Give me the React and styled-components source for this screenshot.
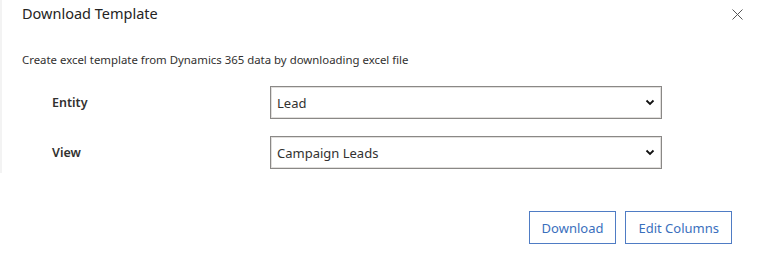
import React from "react";
import styled, { createGlobalStyle } from "styled-components";

const GlobalStyle = createGlobalStyle`
  html, body {
    margin: 0;
    padding: 0;
    background: #fff;
  }
  body {
    font-family: "Segoe UI", "Noto Sans", "Open Sans", sans-serif;
    color: #323130;
  }
`;

const Dialog = styled.div`
  width: 768px;
  height: 258px;
  position: relative;
  overflow: hidden;
`;

const Main = styled.div`
  height: 173px;
  box-sizing: border-box;
  border-left: 2px solid #f3f3f3;
`;

const Header = styled.div`
  display: flex;
  align-items: flex-start;
  justify-content: space-between;
  padding: 2px 24px 0 20px;
  height: 52px;
  box-sizing: border-box;
`;

const Title = styled.h1`
  margin: 0;
  font-size: 14.5px;
  font-weight: 400;
  color: #252423;
  line-height: 22px;
`;

const CloseButton = styled.button`
  border: none;
  background: none;
  padding: 0;
  margin-top: 5px;
  width: 14px;
  height: 14px;
  display: flex;
  align-items: center;
  justify-content: center;
  cursor: pointer;
`;

const Body = styled.div`
  padding: 0 0 0 20px;
`;

const Description = styled.p`
  margin: 0 0 18px;
  font-size: 11.4px;
  line-height: 16px;
  color: #323130;
`;

const FieldRow = styled.div`
  display: grid;
  grid-template-columns: 218px 392px;
  align-items: center;
  padding-left: 30px;
  margin-bottom: ${(p) => p.$gap}px;
`;

const Label = styled.label`
  font-size: 12.5px;
  font-weight: 600;
  color: #323130;
`;

const SelectBox = styled.div`
  height: 33px;
  box-sizing: border-box;
  border: 1px solid #8a8886;
  box-shadow: inset 0 0 0 1px #e1dfdd;
  display: flex;
  align-items: center;
  justify-content: space-between;
  padding: 0 6px 0 6px;
  font-size: 13px;
  color: #323130;
`;

const Footer = styled.div`
  display: flex;
  justify-content: flex-end;
  gap: 9px;
  padding: 38px 36px 0 0;
`;

const Button = styled.button`
  height: 33px;
  padding: 0 12px;
  border: 1px solid #4f7cc4;
  background: #fff;
  color: #3a6fbd;
  font-family: inherit;
  font-size: 13px;
  cursor: pointer;
`;

const Chevron = () => (
  <svg width="10" height="7" viewBox="0 0 10 7">
    <path d="M1.5 1.5 L5 5 L8.5 1.5" fill="none" stroke="#111" strokeWidth="1.8" />
  </svg>
);

const CloseIcon = () => (
  <svg width="11" height="11" viewBox="0 0 11 11">
    <path d="M0.5 0.5 L10.5 10.5 M10.5 0.5 L0.5 10.5" stroke="#555" strokeWidth="1" />
  </svg>
);

const App = () => {
  return (
    <Dialog>
      <GlobalStyle />
      <Main>
        <Header>
          <Title>Download Template</Title>
          <CloseButton aria-label="Close">
            <CloseIcon />
          </CloseButton>
        </Header>
        <Body>
          <Description>
            Create excel template from Dynamics 365 data by downloading excel file
          </Description>
          <FieldRow $gap={17}>
            <Label>Entity</Label>
            <SelectBox>
              <span>Lead</span>
              <Chevron />
            </SelectBox>
          </FieldRow>
          <FieldRow $gap={0}>
            <Label>View</Label>
            <SelectBox>
              <span>Campaign Leads</span>
              <Chevron />
            </SelectBox>
          </FieldRow>
        </Body>
      </Main>
      <Footer>
        <Button>Download</Button>
        <Button>Edit Columns</Button>
      </Footer>
    </Dialog>
  );
};

export default App;
